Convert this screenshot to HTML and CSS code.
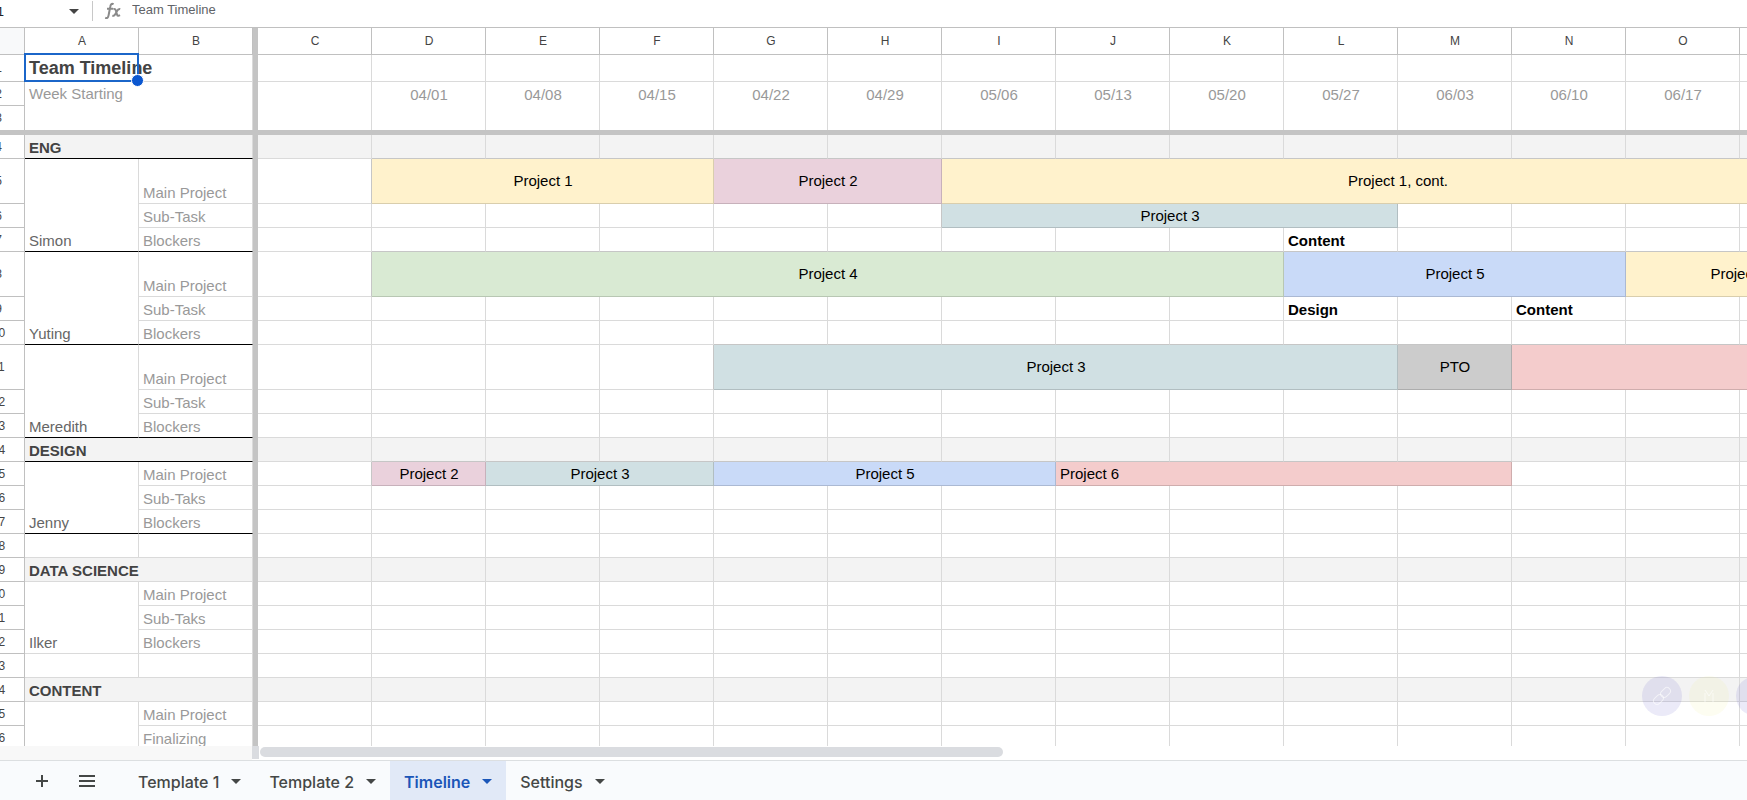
FILE: index.html
```html
<!DOCTYPE html>
<html lang="en">
<head>
<meta charset="utf-8">
<title>Team Timeline</title>
<link rel="stylesheet" href="styles.css">
</head>
<body>
<div class="app">
  <header class="formula-bar">
    <input class="name-box" aria-label="Name box" value="A1">
    <button class="name-menu" aria-label="Named ranges"><span class="caret"></span></button>
    <span class="separator"></span>
    <svg class="fx" viewBox="0 0 18 18" aria-hidden="true"><path d="M9.6 2.2C7.6 1.2 6.6 2.600 6.200 5L4.600 13.200C4.200 15.600 3.200 16.600 1.200 15.800M3 6.800H9M9.400 7.200C11 6.600 11.600 7.400 12 9L13 12.400C13.400 14 14.400 14.200 16 13.200M16.200 7.200C14.600 6.600 13.800 7.600 12.600 9.800L11.400 12C10.400 13.800 9.600 14.200 8.400 13.400"/></svg>
    <input class="formula" aria-label="Formula" value="Team Timeline">
  </header>
  <main class="sheet">
    <table class="grid" id="grid"></table>
    <div class="float-tools">
      <button class="float-btn violet" aria-label="Copy link"><svg viewBox="0 0 24 24"><g transform="rotate(-45 12 12)"><rect x="1.500" y="8.500" width="11" height="7" rx="3.500"/><rect x="11.500" y="8.500" width="11" height="7" rx="3.500"/></g></svg></button>
      <button class="float-btn lemon" aria-label="Highlight"><svg viewBox="0 0 24 24"><path d="M8 6l4 6 4-6M8 18V9M16 18V9"/></svg></button>
      <button class="float-btn violet" aria-label="More"></button>
    </div>
  </main>
  <div class="scroll-row"><div class="scroll-left"></div><div class="scroll-knob"></div><div class="scroll-track"><div class="scroll-thumb"></div></div></div>
  <nav class="tabs" aria-label="Sheets">
    <button class="icon-btn" aria-label="Add sheet"><svg viewBox="0 0 18 18"><path d="M9 3v12M3 9h12"/></svg></button>
    <button class="icon-btn" aria-label="All sheets"><svg viewBox="0 0 18 18"><path d="M1 4h16M1 9h16M1 14h16"/></svg></button>
    <div class="tab-list">
      <button class="tab">Template 1<span class="caret"></span></button>
      <button class="tab">Template 2<span class="caret"></span></button>
      <button class="tab active">Timeline<span class="caret"></span></button>
      <button class="tab">Settings<span class="caret"></span></button>
    </div>
  </nav>
</div>
<script src="grid.js"></script>
</body>
</html>
```
FILE: grid.js
```js
const COLS = ['C','D','E','F','G','H','I','J','K','L','M','N','O','P'];
const DATES = ['', '04/01','04/08','04/15','04/22','04/29','05/06','05/13','05/20','05/27','06/03','06/10','06/17','06/24'];

// Each bar: row -> [start column, span, colour class, text]
const BARS = {
  5: [['D',3,'yellow','Project 1'], ['G',2,'pink','Project 2'], ['I',8,'yellow','Project 1, cont.']],
  6: [['I',4,'teal','Project 3']],
  7: [['L',1,'note','Content']],
  8: [['D',8,'green','Project 4'], ['L',3,'blue','Project 5'], ['O',2,'yellow','Project 1']],
  9: [['L',1,'note','Design'], ['N',1,'note','Content']],
  11: [['G',6,'teal','Project 3'], ['M',1,'gray','PTO'], ['N',3,'red','']],
  15: [['D',1,'pink','Project 2'], ['E',2,'teal','Project 3'], ['G',3,'blue','Project 5'], ['J',4,'red left','Project 6']]
};
const SECTIONS = { 4: 'ENG', 14: 'DESIGN', 19: 'DATA SCIENCE', 24: 'CONTENT' };
const PEOPLE = { 5: 'Simon', 8: 'Yuting', 11: 'Meredith', 15: 'Jenny', 20: 'Ilker', 25: '' };
const LABELS = {
  5: 'Main Project', 6: 'Sub-Task', 7: 'Blockers', 8: 'Main Project', 9: 'Sub-Task', 10: 'Blockers',
  11: 'Main Project', 12: 'Sub-Task', 13: 'Blockers', 15: 'Main Project', 16: 'Sub-Taks', 17: 'Blockers',
  20: 'Main Project', 21: 'Sub-Taks', 22: 'Blockers', 25: 'Main Project', 26: 'Finalizing', 27: 'Blockers'
};
const RULED = [4, 7, 10, 13, 14, 17];
const TALL = [5, 8, 11];

const td = (cls, text, attrs) => `<td class="${cls || ''}" ${attrs || ''}>${text || ''}</td>`;
const split = '<td class="split"></td>';

// True when a coloured bar covers column index i of the row
function covered(row, i) {
  return (BARS[row] || []).some(b => {
    const start = COLS.indexOf(b[0]);
    return b[2] !== 'note' && i >= start && i < start + b[1];
  });
}

function timeline(row) {
  let out = '';
  for (let i = 0; i < COLS.length;) {
    const bar = (BARS[row] || []).find(b => b[0] === COLS[i]);
    const edges = (covered(row, i + 1) ? ' edge-right' : '') + (covered(row + 1, i) ? ' edge-bottom' : '');
    if (bar && bar[2] !== 'note') {
      const span = Math.min(bar[1], COLS.length - i);
      out += td('bar ' + bar[2], bar[3], `colspan="${span}"`);
      i += span;
    } else {
      out += td((bar ? 'note' : '') + edges, bar ? bar[3] : '');
      i++;
    }
  }
  return out;
}

let html = '<colgroup><col class="c-num"><col class="c"><col class="c"><col class="c-split">' +
  '<col class="c">'.repeat(COLS.length) + '</colgroup>';
html += '<thead><tr class="letters"><th class="corner"></th><th>A</th><th>B</th>' + split +
  COLS.map(c => `<th>${c}</th>`).join('') + '</tr></thead><tbody>';
html += '<tr class="r-title"><th>1</th><td class="title" colspan="2"><span class="selection"></span>Team Timeline</td>' +
  split + COLS.map(() => td('')).join('') + '</tr>';
html += '<tr><th>2</th><td class="week" colspan="2" rowspan="2">Week Starting</td>' + split +
  DATES.map(d => td('date', d, 'rowspan="2"')).join('') + '</tr>';
html += '<tr><th class="last">3</th>' + split + '</tr>';
html += `<tr class="freeze"><td colspan="${COLS.length + 4}"></td></tr>`;

for (let r = 4; r <= 27; r++) {
  const cls = [TALL.includes(r) ? 'tall' : '', SECTIONS[r] ? 'section' : ''].join(' ');
  const rule = RULED.includes(r) ? ' ruled' : '';
  html += `<tr class="${cls}"><th>${r}</th>`;
  if (SECTIONS[r]) {
    html += td('heading' + rule, SECTIONS[r], 'colspan="2"');
  } else if (LABELS[r]) {
    if (r in PEOPLE) html += td('person' + (RULED.includes(r + 2) ? ' ruled' : ''), PEOPLE[r], 'rowspan="3"');
    html += td('label' + rule, LABELS[r]);
  } else {
    html += td('') + td('');
  }
  html += split + timeline(r) + '</tr>';
}
document.getElementById('grid').innerHTML = html + '</tbody>';
```
FILE: styles.css
```css
* { box-sizing: border-box; }
body {
  margin: 0;
  background: #fff;
  font-family: "Liberation Sans", Arial, sans-serif;
}
button, input {
  font: inherit;
  border: 0;
  padding: 0;
  background: none;
  color: inherit;
}
.app {
  display: flex;
  flex-direction: column;
  height: 100vh;
  overflow: hidden;
}
.caret {
  display: block;
  border: 5px solid transparent;
  border-top-color: currentColor;
  border-bottom: 0;
}

/* Formula bar */
.formula-bar {
  display: flex;
  align-items: center;
  height: 28px;
  padding-bottom: 5px;
  border-bottom: 1px solid #c0c0c0;
  color: #5f6368;
  font-size: 13px;
}
.name-box {
  width: 77px;
  margin-left: -12px;
  color: #202124;
}
.name-menu {
  width: 18px;
  margin-right: 9px;
  display: flex;
  justify-content: center;
  color: #444;
}
.separator {
  width: 1px;
  height: 20px;
  background: #c8c8c8;
}
.fx {
  width: 18px;
  height: 18px;
  margin: 0 10px 0 11px;
  fill: none;
  stroke: #8a8a8a;
  stroke-width: 2;
}
.formula { flex: 1; padding-bottom: 3px; }

/* Grid */
.sheet {
  position: relative;
  flex: 1;
  min-height: 0;
  overflow: hidden;
}
.grid {
  table-layout: fixed;
  width: 1882px;
  margin-left: -28px;
  border-collapse: separate;
  border-spacing: 0;
  font-size: 15px;
  line-height: 18px;
}
.c-num { width: 53px; }
.c { width: 114px; }
.c-split { width: 5px; }
.grid tr { height: 24px; }
.grid .letters { height: 27px; }
.grid .r-title { height: 27px; }
.grid .tall { height: 45px; }
.grid .freeze { height: 5px; }
.grid td, .grid th {
  padding: 0 3px 0 4px;
  border-right: 1px solid #dadada;
  border-bottom: 1px solid #dadada;
  overflow: hidden;
  white-space: nowrap;
}
.grid th {
  border-color: #c0c0c0;
  color: #444;
  font-size: 12px;
  font-weight: 400;
  line-height: 14px;
}
.grid .corner { background: #f8f9fa; }
.grid .split, .grid .freeze td {
  padding: 0;
  border: 0;
  background: #c4c4c4;
}
.grid .last, .grid .week, .grid .date { border-bottom: 0; }
.grid .title {
  position: relative;
  overflow: visible;
  color: #434343;
  font-size: 18px;
  font-weight: 700;
}
.selection {
  position: absolute;
  top: -2px;
  left: -1px;
  width: 115px;
  height: 29px;
  border: 2px solid #1b66c9;
}
.selection::after {
  content: "";
  position: absolute;
  right: -7px;
  bottom: -7px;
  width: 11px;
  height: 11px;
  border: 1px solid #fff;
  border-radius: 50%;
  background: #0b57d0;
}
.grid .week { vertical-align: top; padding-top: 3px; color: #999; }
.grid .date { vertical-align: top; padding-top: 4px; color: #999; text-align: center; }
.grid .heading, .grid .person, .grid .label, .grid .note {
  padding-bottom: 1px;
  vertical-align: bottom;
}
.grid .heading { color: #434343; font-weight: 700; }
.grid .section td { background: #f3f3f3; }
.grid .section .split { background: #c4c4c4; }
.grid .person { color: #666; }
.grid .label { color: #999; }
.grid .ruled { border-bottom-color: #000; }
.grid .note { color: #000; font-weight: 700; }
.grid .edge-right { border-right-color: #c6c6c6; }
.grid .edge-bottom { border-bottom-color: #c6c6c6; }
.grid .bar {
  color: #000;
  text-align: center;
  border-color: rgba(0, 0, 0, 0.15);
}
.grid .left { text-align: left; }
.yellow { background: #fff2cc; }
.pink { background: #ead1dc; }
.teal { background: #d0e0e3; }
.green { background: #d9ead3; }
.blue { background: #c9daf8; }
.gray { background: #ccc; }
.red { background: #f4cccc; }

/* Floating tools over the grid */
.float-tools {
  position: absolute;
  right: -29px;
  bottom: 30px;
  display: flex;
  gap: 7px;
}
.float-btn {
  display: flex;
  align-items: center;
  justify-content: center;
  width: 40px;
  height: 40px;
  border-radius: 50%;
}
.float-btn svg {
  width: 24px;
  height: 24px;
  fill: none;
  stroke: rgba(255, 255, 255, 0.6);
  stroke-width: 1;
}
.violet { background: rgba(90, 80, 200, 0.12); }
.lemon { background: rgba(235, 235, 140, 0.12); }

/* Horizontal scroll bar */
.scroll-row {
  display: flex;
  height: 14px;
}
.scroll-left { width: 252px; background: #f8f8f8; }
.scroll-knob { width: 7px; margin-bottom: 1px; background: #dadce0; }
.scroll-track { flex: 1; padding: 1px; }
.scroll-thumb {
  width: 50%;
  height: 10px;
  border-radius: 5px;
  background: #dadce0;
}

/* Sheet tabs */
.tabs {
  display: flex;
  align-items: center;
  height: 40px;
  padding-left: 19px;
  border-top: 1px solid #dcdfe1;
  background: #f9fbfd;
  color: #444746;
  font-family: Inter, Roboto, sans-serif;
  font-size: 16px;
  font-weight: 500;
}
.icon-btn {
  display: flex;
  align-items: center;
  justify-content: center;
  width: 45px;
  height: 32px;
}
.icon-btn svg {
  width: 18px;
  height: 18px;
  fill: none;
  stroke: #444746;
  stroke-width: 2;
}
.tab-list { display: flex; height: 100%; margin-left: 15px; }
.tab {
  display: flex;
  align-items: center;
  gap: 12px;
  padding: 2px 14px 0;
}
.tab.active {
  background: #e1e9f7;
  color: #1a56b8;
  font-weight: 600;
}
```
